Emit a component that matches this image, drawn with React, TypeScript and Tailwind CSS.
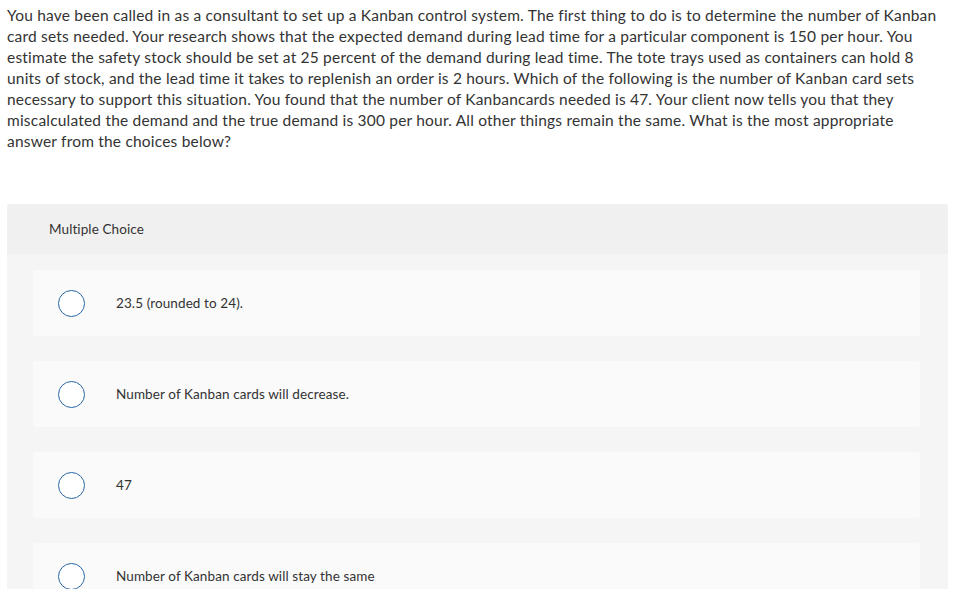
import React from "react";

const lines = [
  "You have been called in as a consultant to set up a Kanban control system. The first thing to do is to determine the number of Kanban",
  "card sets needed. Your research shows that the expected demand during lead time for a particular component is 150 per hour. You",
  "estimate the safety stock should be set at 25 percent of the demand during lead time. The tote trays used as containers can hold 8",
  "units of stock, and the lead time it takes to replenish an order is 2 hours. Which of the following is the number of Kanban card sets",
  "necessary to support this situation. You found that the number of Kanbancards needed is 47. Your client now tells you that they",
  "miscalculated the demand and the true demand is 300 per hour. All other things remain the same. What is the most appropriate",
  "answer from the choices below?",
];

const choices = [
  "23.5 (rounded to 24).",
  "Number of Kanban cards will decrease.",
  "47",
  "Number of Kanban cards will stay the same",
];

export default function App() {
  return (
    <div
      className="w-[977px] h-[606px] bg-white overflow-hidden text-[#333]"
      style={{ fontFamily: "Lato, 'Open Sans', sans-serif" }}
    >
      <div className="pl-[7px] pt-[5px] text-[15.5px] leading-[21px] tracking-[0.2px]">
        {lines.map((l, i) => (
          <div key={i} className="whitespace-nowrap">
            {l}
          </div>
        ))}
      </div>
      <div className="ml-[7px] mt-[52px] w-[941px] h-[385px] overflow-hidden rounded-t-[3px] bg-[#f5f5f5]">
        <div className="h-[50px] bg-[#f0f0f0] pl-[42px] flex items-center text-[13.5px] tracking-[0.1px] text-[#333]">
          Multiple Choice
        </div>
        <div className="pl-[26px] pr-[28px] pt-[16px] flex flex-col gap-[25px]">
          {choices.map((c, i) => (
            <div
              key={i}
              className="h-[66px] shrink-0 rounded-[3px] bg-[#fafafa] flex items-center pl-[25px]"
            >
              <div className="w-[27px] h-[27px] rounded-full border-[1.5px] border-[#2866a6] bg-white shrink-0" />
              <div className="ml-[31px] text-[13.5px] tracking-[0.1px] text-[#333]">{c}</div>
            </div>
          ))}
        </div>
      </div>
    </div>
  );
}
